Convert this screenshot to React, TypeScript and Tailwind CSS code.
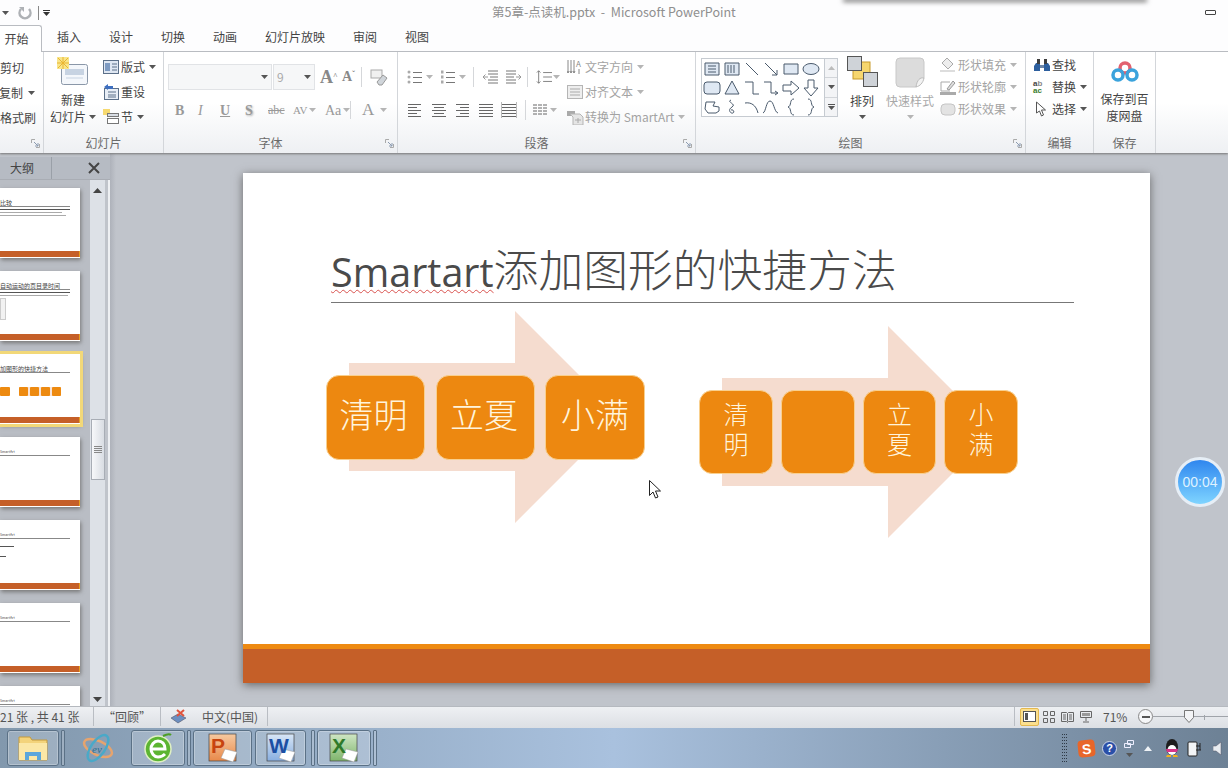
import React from "react";

const Caret = ({ dim = false, className = "" }: { dim?: boolean; className?: string }) => (
  <svg width="7" height="4" viewBox="0 0 7 4" className={`shrink-0 ${className}`}>
    <path d="M0 0h7L3.5 4z" fill={dim ? "#b5b5b5" : "#555"} />
  </svg>
);

const Launcher = () => (
  <svg width="9" height="9" viewBox="0 0 9 9" className="absolute right-[3px] bottom-[5px]">
    <path d="M.5 4V.5H4M8.5 5v3.5H5" fill="none" stroke="#aaa" />
    <path d="M3 3l4 4M7 4v3H4" fill="none" stroke="#8a9ab0" />
  </svg>
);

const Group = ({ w, label, launcher, children }: { w: number | string; label: string; launcher?: boolean; children: React.ReactNode }) => (
  <div className="relative flex h-full shrink-0 flex-col border-r border-[#d3d6da]" style={{ width: w }}>
    <div className="flex h-[81px] min-h-0">{children}</div>
    <div className={`flex flex-1 items-center justify-center pb-[1px] text-[12px] text-[#6a6a6a] ${launcher ? "pr-[20px]" : ""}`}>{label}</div>
    {launcher && <Launcher />}
  </div>
);

const VDiv = ({ h = 24 }: { h?: number }) => <div className="w-px shrink-0 bg-[#d5d7da]" style={{ height: h }} />;

const Lines = ({ kind }: { kind: "left" | "center" | "right" | "just" | "dist" }) => {
  const rows = [2, 5, 8, 11, 14];
  const x = (i: number) => {
    const long = i % 2 === 0;
    if (kind === "left") return [1, long ? 14 : 10];
    if (kind === "center") return long ? [1, 15] : [3, 13];
    if (kind === "right") return [long ? 2 : 6, 15];
    return [1, 15];
  };
  return (
    <svg width="16" height="16" viewBox="0 0 16 16">
      {rows.map((y, i) => (
        <line key={y} x1={x(i)[0]} x2={x(i)[1]} y1={y + 0.5} y2={y + 0.5} stroke="#666" />
      ))}
      {kind === "dist" && <path d="M0 0v16M16 0v16" stroke="#777" />}
    </svg>
  );
};

const ListIcon = ({ numbered }: { numbered?: boolean }) => (
  <svg width="15" height="15" viewBox="0 0 15 15">
    {[2, 7, 12].map((y) => (
      <g key={y}>
        {numbered ? <rect x="1" y={y - 1.5} width="2.5" height="3" fill="#aaa" /> : <circle cx="2" cy={y} r="1.5" fill="#aaa" />}
        <line x1="6" x2="15" y1={y + 0.5} y2={y + 0.5} stroke="#777" />
      </g>
    ))}
  </svg>
);

const IndentIcon = ({ flip }: { flip?: boolean }) => (
  <svg width="16" height="14" viewBox="0 0 16 14" className={flip ? "-scale-x-100" : ""}>
    <path d="M6 1h10M6 4h10M8 7h8M6 10h10M6 13h10" stroke="#777" fill="none" />
    <path d="M6 7H1M3.5 4.5L1 7l2.5 2.5" stroke="#999" fill="none" />
  </svg>
);

const Shape = ({ d, fill = "none" }: { d: string; fill?: string }) => (
  <svg width="18" height="18" viewBox="0 0 18 18">
    <path d={d} fill={fill} stroke="#4a5a6c" />
  </svg>
);

const galleryShapes: { d: string; fill?: string }[] = [
  { d: "M2 3h14v12H2z M5 6h8M5 9h8M5 12h8", fill: "#dfe8f3" },
  { d: "M2 3h14v12H2z M5 5v8M8 5v8M11 5v8", fill: "#dfe8f3" },
  { d: "M3 3l12 12" },
  { d: "M3 3l12 12M15 10v5h-5" },
  { d: "M2 4h14v10H2z", fill: "#dfe8f3" },
  { d: "M1 9a8 5.5 0 1 0 16 0a8 5.5 0 1 0-16 0z", fill: "#dfe8f3" },
  { d: "M4 3h10a3 3 0 0 1 3 3v6a3 3 0 0 1-3 3H4a3 3 0 0 1-3-3V6a3 3 0 0 1 3-3z", fill: "#dfe8f3" },
  { d: "M9 2l7 13H2z", fill: "#dfe8f3" },
  { d: "M2 3h8v12h6" },
  { d: "M2 3h7v11h6M13 12l3 2-3 2" },
  { d: "M1 6h8V2l8 7-8 7v-4H1z", fill: "#fff" },
  { d: "M6 1h6v8h4l-7 8-7-8h4z", fill: "#fff" },
  { d: "M3 4h9l-2 4 6 1v4l-3 2H5l-3-4z" },
  { d: "M8 2c-5 2 6 4 1 7s-1 7 1 6 0-4-2-3" },
  { d: "M2 5c6-1 11 2 13 10" },
  { d: "M1 15c3-1 3-12 7-12s4 11 8 12" },
  { d: "M12 1C7 1 10 8 6 9c4 1 1 8 6 8" },
  { d: "M6 1c5 0 2 7 6 8-4 1-1 8-6 8" },
];

const Gallery = () => (
  <div className="mt-[6px] ml-[5px] flex h-[59px] border border-[#c6cbd1]">
    <div className="grid h-full w-[122px] grid-cols-6 place-items-center bg-white pr-[3px]">
      {galleryShapes.map((s, i) => (
        <Shape key={i} d={s.d} fill={s.fill} />
      ))}
    </div>
    <div className="flex w-[13px] flex-col border-l border-[#c6cbd1] bg-[#f3f4f6]">
      <div className="flex flex-1 items-center justify-center">
        <svg width="7" height="4" viewBox="0 0 7 4"><path d="M0 4h7L3.5 0z" fill="#bbb" /></svg>
      </div>
      <div className="flex flex-1 items-center justify-center border-y border-[#d2d5d9]"><Caret /></div>
      <div className="flex flex-1 flex-col items-center justify-center gap-px">
        <div className="h-px w-[7px] bg-[#555]" />
        <Caret />
      </div>
    </div>
  </div>
);

const FmtRow = ({ icon, text, h }: { icon: React.ReactNode; text: string; h: number }) => (
  <div className="flex items-center text-[#a3a3a3]" style={{ height: h }}>
    <div className="flex w-[18px] justify-center">{icon}</div>
    <span className="ml-[1px] text-[12px] leading-none">{text}</span>
    <Caret dim className="ml-[4px]" />
  </div>
);

const SmallRow = ({ icon, text, caret }: { icon: React.ReactNode; text: string; caret?: boolean }) => (
  <div className="flex h-[25px] items-center text-[#444]">
    <div className="flex w-[18px] justify-center">{icon}</div>
    <span className="ml-[1px] text-[12px] leading-none">{text}</span>
    {caret && <Caret className="ml-[4px]" />}
  </div>
);

const Ribbon = () => (
  <div className="relative z-10 flex h-[101px] bg-gradient-to-b from-white via-white to-[#eef0f3] shadow-[0_1px_2px_#777]">
    <Group w={44} label="" launcher>
      <div className="flex w-full flex-col whitespace-nowrap pt-[3px] text-[12px] text-[#444]">
        <div className="flex h-[25px] items-center">剪切</div>
        <div className="flex h-[25px] items-center -ml-px">复制<Caret className="ml-[5px]" /></div>
        <div className="flex h-[25px] items-center">格式刷</div>
      </div>
    </Group>
    <Group w={120} label="幻灯片">
      <div className="flex w-[58px] flex-col items-center pt-[5px] text-[12px] leading-[17px] text-[#444]">
        <svg width="32" height="28" viewBox="0 0 32 28" className="mb-[6px]">
          <rect x="4.5" y="7.5" width="26" height="20" rx="2" fill="#f4f7fb" stroke="#8a97a8" />
          <rect x="8" y="12" width="19" height="6" fill="#c7d3e2" />
          <path d="M9 21h17" stroke="#c7d3e2" />
          <rect x="0" y="0" width="12" height="12" fill="#f8e58a" />
          <path d="M1 1l10 10M11 1L1 11M6 0v12M0 6h12" stroke="#eab530" />
        </svg>
        <span>新建</span>
        <span className="flex items-center whitespace-nowrap">幻灯片<Caret className="ml-[3px]" /></span>
      </div>
      <div className="flex flex-col pt-[2px]">
        <SmallRow text="版式" caret icon={<svg width="16" height="14" viewBox="0 0 16 14"><rect x=".5" y=".5" width="15" height="13" fill="#dfe7f2" stroke="#5c7089" /><rect x="2" y="3" width="5" height="8" fill="#7e9bc2" /><path d="M9 4h5M9 7h5M9 10h5" stroke="#5c7089" /></svg>} />
        <SmallRow text="重设" icon={<svg width="16" height="16" viewBox="0 0 16 16"><rect x="1.5" y="4.5" width="14" height="11" fill="#e8eef6" stroke="#5c7089" /><path d="M5 8h8M5 11h8M5 13h8" stroke="#5c7089" /><path d="M1 3l4-3v2h5v3H5v1z" fill="#3e6fc0" /></svg>} />
        <SmallRow text="节" caret icon={<svg width="16" height="15" viewBox="0 0 16 15"><rect x="0" y="0" width="7" height="6" fill="#f6d970" /><rect x="4.5" y="4.5" width="11" height="3" fill="#d8dde4" stroke="#777" /><rect x="4.5" y="9.5" width="11" height="5" fill="#fff" stroke="#777" /></svg>} />
      </div>
    </Group>
    <Group w={234} label="字体" launcher>
      <div className="flex flex-col pl-[4px]">
        <div className="mt-[12px] flex h-[26px] items-center">
          <div className="flex h-[26px] w-[104px] items-center justify-end border border-[#e1e3e6] bg-[#f6f7f8] pr-[3px]"><Caret /></div>
          <div className="ml-px flex h-[26px] w-[42px] items-center justify-between border border-[#e1e3e6] bg-[#f6f7f8] px-[3px] text-[12px] text-[#aaa]">9<Caret /></div>
          <span className="ml-[5px] w-[20px] font-['Liberation_Serif',serif] text-[18px] leading-none font-bold text-[#888]">A<sup className="text-[8px]">^</sup></span>
          <span className="ml-[2px] w-[17px] font-['Liberation_Serif',serif] text-[14px] leading-none font-bold text-[#888]">A<sup className="text-[8px]">ˇ</sup></span>
          <div className="mr-[8px] ml-[2px]"><VDiv h={20} /></div>
          <svg width="18" height="17" viewBox="0 0 18 17"><rect x="1" y="1" width="11" height="8" fill="#f0f0f0" stroke="#aaa" /><path d="M7 13l6-7 4 3-5 7H9z" fill="#d0d5da" stroke="#999" /></svg>
        </div>
        <div className="mt-[8px] flex h-[24px] items-center font-['Liberation_Serif',serif] text-[#999]">
          <span className="ml-[7px] w-[23px] text-[14px] font-bold">B</span>
          <span className="w-[22px] text-[14px] italic">I</span>
          <span className="w-[25px] text-[14px] font-bold underline">U</span>
          <span className="w-[23px] text-[14px] font-bold [text-shadow:1px_1px_2px_#aaa]">S</span>
          <span className="w-[25px] text-[12px] line-through">abc</span>
          <span className="flex w-[32px] items-center text-[11px]">AV<Caret dim className="ml-[2px]" /></span>
          <span className="flex w-[25px] items-center text-[14px]">Aa<Caret dim className="ml-[2px]" /></span>
          <VDiv h={18} />
          <span className="ml-[11px] flex items-center text-[17px]">A<Caret dim className="ml-[6px]" /></span>
        </div>
      </div>
    </Group>
    <Group w={298} label="段落" launcher>
      <div className="flex w-[169px] shrink-0 flex-col pl-[9px]">
        <div className="mt-[15px] flex h-[20px] items-center">
          <ListIcon /><Caret dim className="ml-[4px] mr-[7px]" />
          <ListIcon numbered /><Caret dim className="ml-[4px] mr-[7px]" />
          <div className="mr-[8px]"><VDiv h={20} /></div>
          <IndentIcon /><div className="w-[8px]" /><IndentIcon flip />
          <div className="ml-[5px] mr-[8px]"><VDiv h={20} /></div>
          <svg width="16" height="16" viewBox="0 0 18 16"><path d="M3 1v14M1 3l2-2 2 2M1 13l2 2 2-2M8 3h10M8 8h10M8 13h10" stroke="#777" fill="none" /></svg>
          <Caret dim className="ml-[1px]" />
        </div>
        <div className="mt-[13px] flex h-[20px] items-center gap-[7.5px]">
          <Lines kind="left" /><Lines kind="center" /><Lines kind="right" /><Lines kind="just" /><Lines kind="dist" />
          <VDiv h={20} />
          <div className="flex items-center">
            <svg width="14" height="12" viewBox="0 0 14 12"><path d="M0 1h4M0 4h4M0 7h4M0 10h4M5 1h4M5 4h4M5 7h4M5 10h4M10 1h4M10 4h4M10 7h4M10 10h4" stroke="#666" /></svg>
            <Caret dim className="ml-[3px]" />
          </div>
        </div>
      </div>
      <div className="flex flex-col pt-[2px] -ml-[1px]">
        <FmtRow h={25} text="文字方向" icon={<svg width="16" height="16" viewBox="0 0 16 16"><path d="M1 1v13M4 1v13M7 1v13M0 12l1 2 1-2M3 12l1 2 1-2M6 12l1 2 1-2" stroke="#888" fill="none" /><text x="9" y="8" fontSize="8" fill="#888">A</text><path d="M12 10v5" stroke="#888" /></svg>} />
        <FmtRow h={25} text="对齐文本" icon={<svg width="16" height="16" viewBox="0 0 16 16"><rect x=".5" y="1.5" width="15" height="13" fill="#eee" stroke="#b5b5b5" /><path d="M3 5h10M3 8h10M3 11h10" stroke="#aaa" /></svg>} />
        <FmtRow h={26} text="转换为 SmartArt" icon={<svg width="17" height="16" viewBox="0 0 17 16"><path d="M0 2h8v5H0z" fill="#aaa" /><path d="M3 5h10l3 3v8H6V8z" fill="#e5e5e5" stroke="#b5b5b5" /><path d="M8 11h6M11 9v5" stroke="#aaa" /></svg>} />
      </div>
    </Group>
    <Group w={330} label="绘图" launcher>
      <Gallery />
      <div className="ml-[8px] flex w-[32px] flex-col items-center pt-[4px] text-[12px] leading-none text-[#444]">
        <svg width="31" height="31" viewBox="0 0 31 31">
          <rect x="6" y="6" width="17" height="17" fill="#f6d66e" stroke="#c79a2a" />
          <rect x=".5" y=".5" width="14" height="14" fill="#cfd3d8" stroke="#555" />
          <rect x="16.5" y="16.5" width="14" height="14" fill="#cfd3d8" stroke="#555" />
        </svg>
        <span className="mt-[8px] whitespace-nowrap">排列</span>
        <Caret className="mt-[8px]" />
      </div>
      <div className="ml-[7px] flex w-[50px] flex-col items-center pt-[5px] text-[12px] leading-none text-[#a8a8a8]">
        <svg width="30" height="31" viewBox="0 0 30 31">
          <path d="M5 1h20a4 4 0 0 1 4 4v16l-8 9H5a4 4 0 0 1-4-4V5a4 4 0 0 1 4-4z" fill="#dcdcdc" stroke="#c8c8c8" />
          <path d="M29 21c-4-1-7 2-8 9 4-1 7-4 8-9z" fill="#f2f2f2" stroke="#bbb" />
        </svg>
        <span className="mt-[7px] whitespace-nowrap">快速样式</span>
        <Caret dim className="mt-[8px]" />
      </div>
      <div className="ml-[4px] flex flex-col pt-[1px]">
        <FmtRow h={23} text="形状填充" icon={<svg width="16" height="15" viewBox="0 0 16 15"><path d="M7 1l6 6-5 5-6-6z" fill="#eee" stroke="#aaa" /><path d="M0 13h15v2H0z" fill="#ddd" /></svg>} />
        <FmtRow h={22} text="形状轮廓" icon={<svg width="16" height="15" viewBox="0 0 16 15"><path d="M1 2h9M1 2v9h9" fill="none" stroke="#aaa" /><path d="M7 9l6-8 2 2-6 7z" fill="#ddd" stroke="#999" /><path d="M0 12h16v3H0z" fill="#aaa" /></svg>} />
        <FmtRow h={22} text="形状效果" icon={<svg width="16" height="13" viewBox="0 0 16 13"><rect x="1" y="1" width="14" height="11" rx="4" fill="#e3e3e3" stroke="#c5c5c5" /></svg>} />
      </div>
    </Group>
    <Group w={68} label="编辑">
      <div className="flex flex-col pt-[1px] pl-[7px]">
        <div className="flex h-[23px] items-center text-[#444]">
          <svg width="16" height="14" viewBox="0 0 16 14" className="w-[18px]"><path d="M2 5h4v8H0V8zM14 5h-4v8h6V8z" fill="#2d5f9e" /><path d="M3 1h3v5H3zM10 1h3v5h-3z" fill="#3d3d3d" /><path d="M6 7h4v3H6z" fill="#6c86a8" /></svg>
          <span className="ml-[1px] text-[12px] leading-none">查找</span>
        </div>
        <div className="flex h-[22px] items-center text-[#444]">
          <span className="w-[18px] font-['Liberation_Sans',sans-serif] text-[8px] leading-[7px] font-bold">a<span className="text-[#888]">b</span><br /><span className="text-[#3a7d2c]">ac</span></span>
          <span className="ml-[1px] text-[12px] leading-none">替换</span><Caret className="ml-[4px]" />
        </div>
        <div className="flex h-[22px] items-center text-[#444]">
          <svg width="13" height="16" viewBox="0 0 13 16" className="w-[18px]"><path d="M1 1v11l3-2 2 5 2-1-2-5h4z" fill="#fff" stroke="#555" /></svg>
          <span className="ml-[1px] text-[12px] leading-none">选择</span><Caret className="ml-[4px]" />
        </div>
      </div>
    </Group>
    <Group w={62} label="保存">
      <div className="flex w-full flex-col items-center pt-[9px] text-[12px] leading-[17px] text-[#444]">
        <svg width="28" height="22" viewBox="0 0 28 22" className="mb-[7px]">
          <circle cx="14" cy="7" r="5" fill="none" stroke="#e2616f" strokeWidth="3.5" />
          <circle cx="7" cy="14" r="5" fill="none" stroke="#3ba3dc" strokeWidth="3.5" />
          <circle cx="21" cy="14" r="5" fill="none" stroke="#3ba3dc" strokeWidth="3.5" />
        </svg>
        <span className="whitespace-nowrap">保存到百</span>
        <span className="whitespace-nowrap">度网盘</span>
      </div>
    </Group>
  </div>
);

const Thumb = ({ title, tiny, selected, children }: { title?: string; tiny?: boolean; selected?: boolean; children?: React.ReactNode }) => (
  <div className={`relative mb-[13px] h-[70px] w-[80px] shrink-0 bg-white shadow-[1px_2px_4px_#777] ${selected ? "outline-[3px] outline-[#f2d878]" : ""}`}>
    <div className={`flex h-[18px] items-end overflow-hidden whitespace-nowrap text-[#444] ${tiny ? "text-[3.5px] leading-[6px]" : "text-[6px] leading-[7px]"}`}>{title}</div>
    <div className="mr-[10px] h-px bg-[#888]" />
    <div className="h-[44px] overflow-hidden">{children}</div>
    <div className="h-[6px] border-r border-[#e8a020] bg-[#c55f28]" />
  </div>
);

const Dash = ({ w, dark, gap = 2 }: { w: number; dark?: boolean; gap?: number }) => (
  <div className={`h-px ${dark ? "bg-[#555]" : "bg-[#aaa]"}`} style={{ width: w, marginTop: gap }} />
);

const ThumbPanel = () => (
  <div className="flex w-[110px] shrink-0 flex-col">
    <div className="mt-[4px] flex h-[23px] border-b border-[#a9adb4] bg-[#b6bbc3]">
      <div className="flex w-[52px] items-center justify-end border-r border-[#9aa0a8] pr-[17px] text-[12px] text-[#444]">大纲</div>
      <div className="flex flex-1 items-center justify-end pr-[10px]">
        <svg width="12" height="12" viewBox="0 0 12 12"><path d="M1 1l10 10M11 1L1 11" stroke="#444" strokeWidth="2" /></svg>
      </div>
    </div>
    <div className="flex min-h-0 flex-1 border-r-2 border-[#eef0f3]">
      <div className="h-full w-[90px] overflow-hidden bg-[#b9bdc4] pt-[8px]">
        <Thumb title="比较">
          <Dash w={70} dark /><Dash w={62} /><Dash w={66} />
        </Thumb>
        <Thumb title="自动运动的页目录时间">
          <Dash w={70} dark /><Dash w={68} />
          <div className="mt-[2px] h-[22px] w-[6px] border border-[#ccc] bg-[#f2f2f2]" />
        </Thumb>
        <Thumb selected title="加图形的快捷方法">
          <div className="relative flex items-center pt-[14px]">
            <div className="h-[9px] w-[10px] rounded-[1px] bg-[#ed8a10]" />
            <div className="ml-[9px] flex gap-[2px] bg-[#f8e3d8]">
              <div className="h-[9px] w-[9px] rounded-[1px] bg-[#ed8a10]" />
              <div className="h-[9px] w-[9px] rounded-[1px] bg-[#ed8a10]" />
              <div className="h-[9px] w-[9px] rounded-[1px] bg-[#ed8a10]" />
              <div className="h-[9px] w-[9px] rounded-[1px] bg-[#ed8a10]" />
            </div>
          </div>
        </Thumb>
        <Thumb tiny title="SmartArt" />
        <Thumb tiny title="SmartArt">
          <div className="pt-[5px]" /><Dash w={14} dark /><div className="h-[7px]" /><Dash w={6} dark />
        </Thumb>
        <Thumb tiny title="SmartArt" />
        <Thumb tiny title="SmartArt" />
      </div>
      <div className="flex h-full w-[15px] flex-col items-center bg-[#dde1e7]">
        <svg width="9" height="5" viewBox="0 0 9 5" className="mt-[8px]"><path d="M0 5h9L4.5 0z" fill="#444" /></svg>
        <div className="mt-[226px] flex h-[61px] w-[14px] items-center justify-center border border-[#a8adb5] bg-gradient-to-r from-[#f7f8fa] to-[#d9dde3]">
          <svg width="8" height="7" viewBox="0 0 8 7"><path d="M0 .5h8M0 2.5h8M0 4.5h8M0 6.5h8" stroke="#888" /></svg>
        </div>
        <svg width="9" height="5" viewBox="0 0 9 5" className="mt-auto mb-[4px]"><path d="M0 0h9L4.5 5z" fill="#444" /></svg>
      </div>
    </div>
  </div>
);

const Node = ({ w, children }: { w: number; children?: React.ReactNode }) => (
  <div
    className="relative flex shrink-0 items-center justify-center rounded-[13px] border border-[#f9d08e] bg-[#ed8810] font-light text-[#fff4dc]"
    style={{ width: w }}
  >
    {children}
  </div>
);

const BigArrow = () => (
  <svg viewBox="0 0 272 212" width="272" height="212" className="absolute top-0 left-0">
    <path d="M0 52h166V0l106 106-106 106v-52H0z" fill="#f5dccf" />
  </svg>
);

const Slide = () => (
  <div className="flex h-[510px] w-[907px] flex-col bg-white shadow-[0_2px_9px_#666]">
    <div className="ml-[88px] mr-[76px] mt-[65px] h-[65px] border-b border-[#777] whitespace-nowrap text-[#4a4a4a]">
      <span className="font-['Open_Sans',sans-serif] text-[39.5px] leading-[60px] underline decoration-[#d9534f] decoration-wavy decoration-1 underline-offset-[2px]">Smartart</span>
      <span className="text-[44.8px] leading-[60px] font-light">添加图形的快捷方法</span>
    </div>
    <div className="flex">
      <div className="relative ml-[83px] mt-[8px] h-[212px] w-[319px]">
        <div className="absolute top-0 left-[23px]"><BigArrow /></div>
        <div className="relative mt-[64px] flex h-[85px] justify-between text-[34px] leading-none">
          <Node w={99}><span className="relative -top-[4px] -left-[2px]">清明</span></Node>
          <Node w={99}><span className="relative -top-[4px] -left-[1px]">立夏</span></Node>
          <Node w={100}><span className="relative -top-[4px]">小满</span></Node>
        </div>
      </div>
      <div className="relative ml-[54px] mt-[23px] h-[212px] w-[319px]">
        <div className="absolute top-0 left-[23px]"><BigArrow /></div>
        <div className="relative mt-[64px] flex h-[84px] justify-between text-[25px] leading-[30px]">
          <Node w={74}><span className="relative -top-[4px] w-[26px] text-center">清明</span></Node>
          <Node w={74} />
          <Node w={73}><span className="relative -top-[4px] w-[26px] text-center">立夏</span></Node>
          <Node w={74}><span className="relative -top-[4px] w-[26px] text-center">小满</span></Node>
        </div>
      </div>
    </div>
    <div className="mt-auto h-[5px] bg-[#ee8a12]" />
    <div className="h-[34px] bg-[#c55f28]" />
  </div>
);

const StatusBar = () => (
  <div className="relative z-10 flex h-[22px] items-center border-t border-[#b5b9bf] bg-gradient-to-b from-[#eef0f3] to-[#dcdfe4] pb-[2px] text-[12px] text-[#555]">
    <div className="flex h-full w-[94px] items-center border-r border-[#b9bdc3] whitespace-nowrap">21 张 , 共 41 张</div>
    <div className="flex h-full w-[67px] items-center justify-center border-r border-[#b9bdc3]">“回顾”</div>
    <div className="flex h-full w-[107px] items-center border-r border-[#b9bdc3] pl-[9px]">
      <svg width="17" height="16" viewBox="0 0 17 16"><path d="M1 9l7-4 8 4-8 5z" fill="#6d8fc0" stroke="#445" strokeWidth=".5" /><path d="M7 1l7 6M14 1L7 7" stroke="#e0533c" strokeWidth="2" /></svg>
      <span className="ml-[15px] whitespace-nowrap">中文(中国)</span>
    </div>
    <div className="ml-auto flex h-full items-center border-l border-[#b9bdc3] pl-[5px]">
      <div className="flex h-[18px] w-[19px] items-center justify-center rounded-[2px] border border-[#e5b94f] bg-[#fbdf8e]">
        <svg width="13" height="11" viewBox="0 0 13 11"><rect x=".5" y=".5" width="12" height="10" fill="#fff" stroke="#555" /><rect x="2" y="2" width="3" height="7" fill="#555" /></svg>
      </div>
      <svg width="12" height="12" viewBox="0 0 12 12" className="ml-[4px]"><path d="M.5.5h4v4h-4zM7.5.5h4v4h-4zM.5 7.5h4v4h-4zM7.5 7.5h4v4h-4z" fill="none" stroke="#666" /></svg>
      <svg width="13" height="12" viewBox="0 0 13 12" className="ml-[6px]"><path d="M.5 1.5h5l1 1 1-1h5v9h-5l-1 1-1-1h-5zM6.5 2.5v8M2 4h3M2 6h3M2 8h3M8 4h3M8 6h3M8 8h3" fill="none" stroke="#666" /></svg>
      <svg width="12" height="13" viewBox="0 0 12 13" className="ml-[6px]"><path d="M.5 1.5h11v6H.5zM6 8v3M3 12h6" fill="none" stroke="#666" /><path d="M2 3h8v3H2z" fill="#999" /></svg>
      <span className="ml-[11px] w-[29px] text-[#555]">71%</span>
      <div className="ml-[6px] flex h-[15px] w-[15px] items-center justify-center rounded-full border border-[#888] bg-[#f5f6f8]"><div className="h-[2px] w-[8px] bg-[#555]" /></div>
      <div className="relative flex h-full w-[75px] items-center">
        <div className="h-px w-full bg-[#a0a4aa]" />
        <svg width="10" height="13" viewBox="0 0 10 13" className="absolute left-[31px] top-[3px]"><path d="M.5.5h9v7l-4.5 5-4.5-5z" fill="#f3f4f6" stroke="#777" /></svg>
        <div className="absolute left-[51px] top-[8px] h-[5px] w-px bg-[#a0a4aa]" />
      </div>
    </div>
  </div>
);

const TaskBtn = ({ w, children, ml = 0 }: { w: number; children: React.ReactNode; ml?: number }) => (
  <div
    className="flex h-[36px] shrink-0 items-center justify-center rounded-[3px] border border-[#5b7186] bg-white/20 shadow-[inset_0_0_0_1px_#ffffff40]"
    style={{ width: w, marginLeft: ml }}
  >
    {children}
  </div>
);

const Bars = () => <div className="ml-[2px] h-[36px] w-[4px] shrink-0 rounded-[1px] border border-[#5b7186] bg-white/20" />;

const Office = ({ from, to, letter, color }: { from: string; to: string; letter: string; color: string }) => (
  <svg width="30" height="30" viewBox="0 0 30 30">
    <defs>
      <linearGradient id={`g${letter}`} x1="0" y1="0" x2="0" y2="1"><stop offset="0" stopColor={from} /><stop offset="1" stopColor={to} /></linearGradient>
    </defs>
    <rect x="1" y="1" width="27" height="27" fill={`url(#g${letter})`} stroke="#444" strokeWidth=".7" />
    <path d="M17 16l12 3-4 10-12-4z" fill="#fff" stroke="#999" strokeWidth=".5" />
    <text x="3" y="20" fontFamily="Liberation Sans" fontWeight="bold" fontSize="21" fill={color}>{letter}</text>
  </svg>
);

const Taskbar = () => (
  <div className="flex h-[40px] items-center bg-gradient-to-r from-[#8298ad] via-[#a9c1de] to-[#6d8195] pl-[7px]">
    <TaskBtn w={52}>
      <svg width="32" height="30" viewBox="0 0 32 30">
        <path d="M2 4h11l2 3h15v20H2z" fill="#f3d37b" stroke="#c49a3c" />
        <path d="M2 10h28v17H2z" fill="#fbe7a6" />
        <path d="M8 27v-8h16v8h-4v-4h-8v4z" fill="#5aa6dc" />
      </svg>
    </TaskBtn>
    <Bars />
    <div className="flex w-[66px] shrink-0 justify-center">
      <svg width="32" height="30" viewBox="0 0 32 30" fill="none">
        <ellipse cx="16" cy="15" rx="15" ry="7" stroke="#e6a46e" strokeWidth="2.5" transform="rotate(25 16 15)" />
        <ellipse cx="16" cy="15" rx="15" ry="7" stroke="#4aa9c8" strokeWidth="2.5" transform="rotate(-55 16 15)" />
        <text x="10" y="20" fontSize="11" fontStyle="italic" fill="#2a6f8f" fontFamily="Liberation Serif">ev</text>
      </svg>
    </div>
    <TaskBtn w={54}>
      <svg width="30" height="32" viewBox="0 0 30 32">
        <circle cx="15" cy="17" r="13" fill="#5cb531" stroke="#dff0c4" strokeWidth="1.5" />
        <path d="M8 17h14c0-5-3-8-7-8s-7 4-7 8 3 8 7 8c3 0 5-1 7-3" fill="none" stroke="#fff" strokeWidth="3" />
        <path d="M20 4c4-2 7-2 8-1" fill="none" stroke="#4d9e26" strokeWidth="2" />
      </svg>
    </TaskBtn>
    <Bars />
    <TaskBtn w={59} ml={2}><Office from="#f6c9a0" to="#e8894a" letter="P" color="#c8440f" /></TaskBtn>
    <TaskBtn w={51} ml={3}><Office from="#d8e6f6" to="#88aee0" letter="W" color="#1c4fa3" /></TaskBtn>
    <div className="ml-[3px]"><Bars /></div>
    <TaskBtn w={54} ml={2}><Office from="#cfe6c4" to="#7fb56c" letter="X" color="#2f7a2b" /></TaskBtn>
    <Bars />
    <div className="ml-auto flex items-center pr-[6px]">
      <div className="grid grid-cols-3 gap-x-[1px] gap-y-[2px]">
        {Array.from({ length: 30 }).map((_, i) => <div key={i} className="h-[1px] w-[1px] bg-[#2f3a46]" />)}
      </div>
      <div className="ml-[11px] flex h-[17px] w-[17px] -rotate-6 items-center justify-center rounded-[4px] bg-[#e8662a] font-['Liberation_Sans',sans-serif] text-[14px] leading-none font-bold text-white">S</div>
      <div className="ml-[7px] flex h-[15px] w-[15px] items-center justify-center rounded-full border border-[#cfd8e8] bg-[#2a4fa8] font-['Liberation_Sans',sans-serif] text-[11px] font-bold text-white">?</div>
      <div className="ml-[6px] flex w-[12px] flex-col items-center gap-[5px]">
        <svg width="10" height="8" viewBox="0 0 10 8"><path d="M3.5.5h6v4h-6zM.5 3.5h6v4h-6z" fill="none" stroke="#eef" /></svg>
        <Caret />
      </div>
      <svg width="8" height="5" viewBox="0 0 8 5" className="ml-[9px]"><path d="M0 5h8L4 0z" fill="#eef2f6" /></svg>
      <svg width="16" height="18" viewBox="0 0 16 18" className="ml-[12px]">
        <ellipse cx="8" cy="8" rx="6" ry="8" fill="#1d1d1d" />
        <ellipse cx="8" cy="11" rx="4.5" ry="5" fill="#fff" />
        <path d="M2 10h12l-1 3H3z" fill="#d8358a" />
        <path d="M3 16h4v2H2zM13 16H9v2h5z" fill="#f2b01e" />
      </svg>
      <svg width="16" height="17" viewBox="0 0 16 17" className="ml-[7px]">
        <rect x="1" y="2" width="9" height="14" rx="1" fill="#f2f4f6" stroke="#222" />
        <path d="M9 6h4V3M13 10V6M9 10h5" stroke="#222" fill="none" />
      </svg>
      <svg width="9" height="15" viewBox="0 0 9 15" className="ml-[10px]"><path d="M0 5h3l5-4v13l-5-4H0z" fill="#e8ecf0" stroke="#556" strokeWidth=".5" /></svg>
    </div>
  </div>
);

export default function App() {
  return (
    <div className="relative flex h-[768px] w-[1228px] flex-col overflow-hidden bg-[#c0c4cb] font-['Noto_Sans_CJK_SC','Liberation_Sans',sans-serif]">
      <div className="relative flex h-[25px] items-center bg-[#fdfdfe] pl-[2px]">
        <Caret />
        <svg width="14" height="14" viewBox="0 0 14 14" className="ml-[9px]">
          <path d="M3 3a5.5 5.5 0 1 0 8 0" fill="none" stroke="#aeb1b5" strokeWidth="2.5" />
          <path d="M1 1h5v5z" fill="#aeb1b5" />
        </svg>
        <div className="ml-[6px] h-[14px] w-px bg-[#888]" />
        <div className="ml-[4px] flex flex-col items-center gap-px">
          <div className="h-px w-[7px] bg-[#333]" />
          <svg width="7" height="4" viewBox="0 0 7 4"><path d="M0 0h7L3.5 4z" fill="#333" /></svg>
        </div>
        <span className="ml-[442px] whitespace-pre text-[12.5px] text-[#8f8f8f]">第5章-点读机.pptx  -  Microsoft PowerPoint</span>
        <div className="ml-auto mr-[12px] h-[5px] w-[11px] rounded-[1px] border border-[#444]" />
      </div>
      <div className="relative z-20 flex h-[27px] items-end border-b border-[#b9bcc1] bg-[#fdfdfe] pb-px text-[12px] text-[#444]">
        <div className="-mb-[2px] flex h-[27px] w-[42px] items-center justify-center rounded-tr-[3px] border-r border-t border-[#b9bcc1] bg-white pr-[8px]">开始</div>
        <div className="flex h-[26px] items-center gap-[28px] pl-[15px]">
          <span>插入</span><span>设计</span><span>切换</span><span>动画</span><span>幻灯片放映</span><span>审阅</span><span>视图</span>
        </div>
      </div>
      <Ribbon />
      <div className="flex min-h-0 flex-1">
        <ThumbPanel />
        <div className="flex-1 bg-gradient-to-r from-[#aeb2ba] to-[#c0c4cb] to-[6px] pt-[20px] pl-[133px]">
          <Slide />
        </div>
      </div>
      <StatusBar />
      <Taskbar />

      <div className="absolute top-0 left-[845px] h-0 w-[300px] shadow-[0_0_5px_2px_#777]" />
      <div className="absolute top-[457px] left-[1175px] flex h-[50px] w-[50px] items-center justify-center rounded-full border-[3px] border-[#e6eef6] bg-gradient-to-b from-[#2f86ee] to-[#7fd4ff] font-['Liberation_Sans',sans-serif] text-[14px] text-[#dff2ff]">00:04</div>
      <svg width="14" height="20" viewBox="0 0 14 20" className="absolute top-[480px] left-[649px]">
        <path d="M.5.5v15l3.5-3.5 2.5 6 2.5-1-2.5-6h5z" fill="#fff" stroke="#222" />
      </svg>
    </div>
  );
}
